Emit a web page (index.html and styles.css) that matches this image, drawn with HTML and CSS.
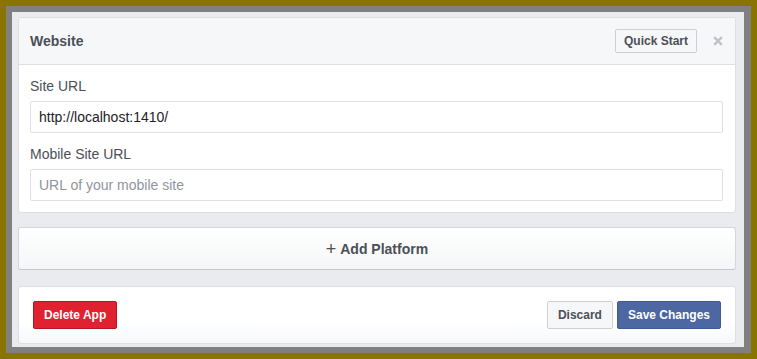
FILE: index.html
```html
<!DOCTYPE html>
<html>
<head>
<meta charset="utf-8">
<link rel="stylesheet" href="styles.css">
</head>
<body>
<div class="frame">
  <div class="shell">
    <div class="page">
      <section class="card platform">
        <header class="card-head">
          <h2 class="card-title">Website</h2>
          <button class="btn btn-light">Quick Start</button>
          <span class="close" aria-label="Close">
            <svg width="10" height="10" viewBox="0 0 10 10"><path d="M1.2 1.2 L8.8 8.8 M8.8 1.2 L1.2 8.8" stroke="#bec2c9" stroke-width="2.4" stroke-linecap="butt"/></svg>
          </span>
        </header>
        <div class="card-body">
          <div class="field">
            <label class="label">Site URL</label>
            <input class="input" type="text" value="http://localhost:1410/">
          </div>
          <div class="field">
            <label class="label">Mobile Site URL</label>
            <input class="input" type="text" placeholder="URL of your mobile site">
          </div>
        </div>
      </section>

      <section class="card add">
        <span class="plus">+</span>&nbsp;Add Platform
      </section>

      <section class="card footer">
        <button class="btn btn-red">Delete App</button>
        <div class="spacer"></div>
        <button class="btn btn-light btn-tall">Discard</button>
        <button class="btn btn-blue">Save Changes</button>
      </section>
    </div>
  </div>
</div>
</body>
</html>
```

FILE: styles.css
```css
* { box-sizing: border-box; }
html, body { margin: 0; padding: 0; }
body {
  font-family: "Liberation Sans", Arial, Helvetica, sans-serif;
  color: #4b4f56;
  width: 757px;
  height: 359px;
  overflow: hidden;
}
.frame {
  background: #8a7400;
  padding: 6px;
  height: 359px;
}
.shell {
  background: #808080;
  padding: 6px 7px 6px 6px;
  height: 347px;
}
.page {
  background: #e9ebee;
  height: 335px;
  padding: 5px 8px 3px 6px;
}
.card {
  background: #fff;
  border: 1px solid #dddfe2;
  border-radius: 3px;
}
.platform { height: 196px; }
.card-head {
  display: flex;
  align-items: center;
  height: 47px;
  padding: 0 12px 0 11px;
  background: #f6f7f9;
  border-bottom: 1px solid #dddfe2;
  border-radius: 3px 3px 0 0;
}
.card-title {
  margin: 0;
  font-size: 14px;
  font-weight: bold;
  color: #4b4f56;
  flex: 1;
  line-height: 16px;
}
.close {
  display: flex;
  width: 10px;
  height: 10px;
  margin-left: 16px;
}
.card-body {
  padding: 13px 12px 11px 11px;
}
.field + .field { margin-top: 13px; }
.label {
  display: block;
  font-size: 14px;
  line-height: 16px;
  color: #4b4f56;
  margin-bottom: 7px;
}
.input {
  display: block;
  width: 100%;
  height: 32px;
  border: 1px solid #dddfe2;
  border-radius: 2px;
  padding: 0 8px;
  font-family: inherit;
  font-size: 14px;
  color: #1d2129;
  background: #fff;
  outline: none;
}
.input::placeholder { color: #90949c; }
.btn {
  font-family: inherit;
  font-size: 12px;
  font-weight: bold;
  border-radius: 2px;
  height: 24px;
  padding: 0 8px;
  line-height: 22px;
  cursor: pointer;
}
.btn-light {
  background: #f6f7f9;
  border: 1px solid #ced0d4;
  color: #4b4f56;
}
.btn-tall { height: 28px; padding: 0 10px; background: #f6f7f9; }
.btn-red {
  height: 28px;
  padding: 0 10px;
  background: #e0212f;
  border: 1px solid #b5161f;
  color: #fff;
}
.btn-blue {
  height: 28px;
  padding: 0 10px;
  margin-left: 4px;
  background: #4c67a1;
  border: 1px solid #415a92;
  color: #fff;
}
.add {
  margin-top: 14px;
  height: 43px;
  display: flex;
  align-items: center;
  justify-content: center;
  font-size: 14px;
  font-weight: bold;
  color: #4b4f56;
  background: linear-gradient(#ffffff, #f5f6f7);
  border-color: #d3d6db #d3d6db #c4c7cc;
}
.plus { font-weight: normal; font-size: 18px; line-height: 16px; position: relative; top: 0; }
.footer {
  margin-top: 16px;
  height: 58px;
  display: flex;
  align-items: center;
  padding: 0 14px;
  background: linear-gradient(#ffffff 60%, #f7f8fa);
}
.spacer { flex: 1; }
```
